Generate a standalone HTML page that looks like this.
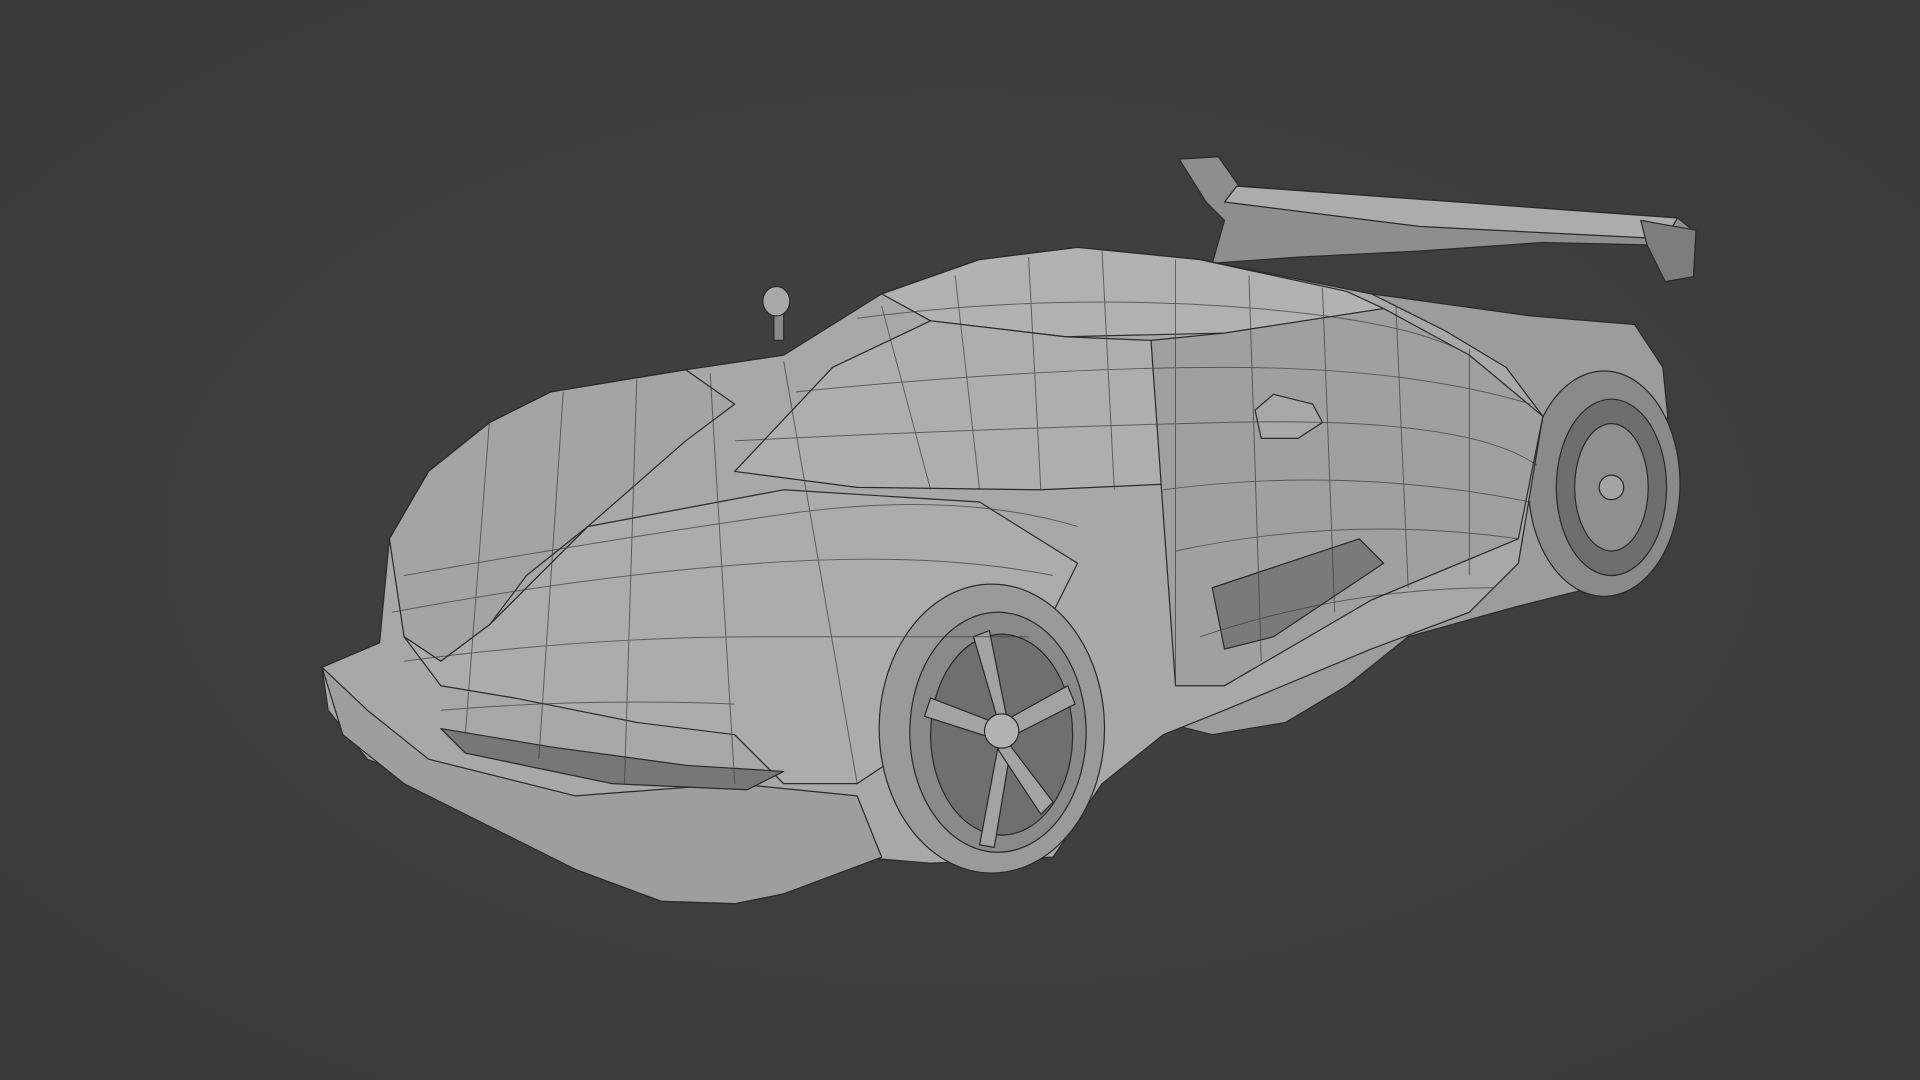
<!DOCTYPE html>
<html><head><meta charset="utf-8"><style>
html,body{margin:0;padding:0;background:#3d3d3d;width:1920px;height:1080px;overflow:hidden}
svg{display:block}
</style></head><body>
<svg width="1920" height="1080" viewBox="0 0 1568 882" xmlns="http://www.w3.org/2000/svg">
<defs>
<radialGradient id="bg" cx="50%" cy="50%" r="70%"><stop offset="0" stop-color="#424242"/><stop offset="1" stop-color="#3a3a3a"/></radialGradient>
</defs>
<rect width="1568" height="882" fill="url(#bg)"/>
<g stroke="#2a2a2a" stroke-width="1" stroke-linejoin="round">
<polygon points="963,130 995,128 1012,152 1370,178 1385,190 1383,226 1360,230 1345,200 1260,198 1160,205 1060,210 990,215 1000,180 985,165" fill="#8e8e8e"/>
<polygon points="1010,152 1370,178 1360,195 1160,185 1000,165" fill="#acacac"/>
<polygon points="1340,180 1385,188 1383,226 1360,230 1345,200" fill="#7d7d7d"/>
<polygon points="1120,240 1250,258 1335,265 1358,300 1362,340 1345,440 1300,480 1240,495 1150,520 1100,560 1050,590 990,600 950,590 1000,420 1060,300" fill="#9c9c9c"/>
<ellipse cx="1310" cy="395" rx="62" ry="92" fill="#8a8a8a"/>
<ellipse cx="1316" cy="398" rx="45" ry="72" fill="#6e6e6e"/>
<ellipse cx="1316" cy="398" rx="30" ry="52" fill="#8f8f8f"/>
<circle cx="1316" cy="398" r="10" fill="#a4a4a4"/>
<polygon points="263,545 310,525 318,440 350,385 400,345 450,320 560,302 640,290 720,240 800,212 880,202 980,212 1120,240 1180,270 1230,300 1260,340 1240,460 1200,500 1120,530 1000,580 950,600 900,640 860,700 760,705 700,700 640,730 600,738 540,736 470,710 350,640 300,620 268,580" fill="#a8a8a8"/>
<polygon points="720,240 800,212 880,202 980,212 1100,238 1130,252 1000,272 870,275 760,262" fill="#b2b2b2"/>
<polygon points="600,385 680,300 760,262 870,275 940,278 955,330 960,395 850,400 700,398" fill="#aeaeae"/>
<polygon points="940,278 1000,272 1130,252 1200,290 1260,340 1240,440 1120,490 1000,560 960,560 950,420" fill="#a0a0a0"/>
<polygon points="990,480 1110,440 1130,460 1040,520 1000,530" fill="#7a7a7a"/>
<polygon points="318,440 350,385 400,345 450,320 560,302 600,330 560,360 480,430 430,470 400,510 360,540 330,520" fill="#a4a4a4"/>
<polygon points="330,520 360,540 400,510 480,430 640,400 800,410 880,460 830,560 760,600 700,640 640,640 600,600 520,590 420,570 360,560" fill="#acacac"/>
<polygon points="263,545 300,580 350,620 470,650 600,640 700,650 720,700 640,730 600,738 540,736 470,710 330,640 280,600" fill="#9e9e9e"/>
<polygon points="360,595 450,610 560,625 640,630 610,645 500,640 380,615" fill="#777"/>
<ellipse cx="810" cy="595" rx="92" ry="118" fill="#9a9a9a"/>
<ellipse cx="815" cy="598" rx="72" ry="98" fill="#8a8a8a"/>
<ellipse cx="818" cy="600" rx="58" ry="82" fill="#6f6f6f"/>
<g fill="#a3a3a3">
<polygon points="812,590 760,570 755,585 808,602"/>
<polygon points="818,590 872,560 878,575 825,602"/>
<polygon points="816,605 800,690 812,692 826,608"/>
<polygon points="822,605 860,655 850,665 815,612"/>
<polygon points="814,585 795,520 808,515 822,585"/>
</g>
<circle cx="818" cy="597" r="14" fill="#b2b2b2"/>
<rect x="632" y="250" width="8" height="28" fill="#8a8a8a"/>
<ellipse cx="634" cy="246" rx="11" ry="12" fill="#a8a8a8"/>
<polygon points="1025,335 1040,322 1072,330 1080,345 1060,358 1030,358" fill="#a8a8a8"/>
</g>
<g stroke="#3a3a3a" stroke-width="0.8" fill="none" opacity="0.7">
<path d="M330,470 Q500,440 640,420 T880,430"/>
<path d="M320,500 Q480,470 620,460 T860,470"/>
<path d="M330,540 Q480,520 620,520 T840,520"/>
<path d="M360,580 Q480,570 600,575"/>
<path d="M700,260 Q850,240 1000,250 T1200,290"/>
<path d="M650,320 Q850,300 1000,300 T1250,330"/>
<path d="M600,360 Q800,350 1000,345 T1255,380"/>
<path d="M950,400 Q1100,380 1250,410"/>
<path d="M960,450 Q1100,420 1240,440"/>
<path d="M980,520 Q1100,480 1220,480"/>
<path d="M400,340 L380,600 M460,320 L440,620 M520,310 L510,640 M580,305 L600,640 M640,295 L700,640 M720,250 L760,400 M780,225 L800,400 M840,210 L850,400 M900,205 L910,400 M960,212 L960,560 M1020,225 L1030,540 M1080,235 L1090,500 M1140,250 L1150,480 M1200,285 L1200,470"/>
</g>
</svg>
</body></html>
